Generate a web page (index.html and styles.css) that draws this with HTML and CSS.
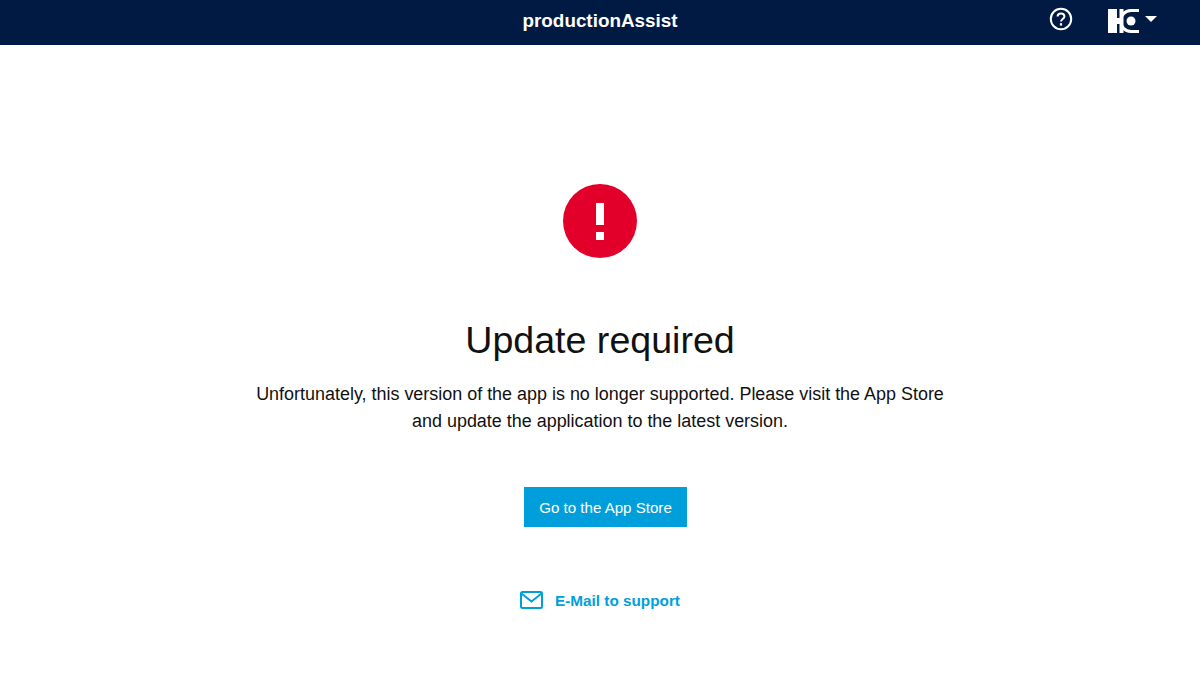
FILE: index.html
```html
<!DOCTYPE html>
<html lang="en">
<head>
    <meta charset="UTF-8">
    <title>productionAssist</title>
    <link rel="stylesheet" href="styles.css">
</head>
<body>
    <header class="topbar">
        <div class="brand">productionAssist</div>
        <div class="topbar-actions">
            <svg class="help-icon" width="24" height="24" viewBox="0 0 24 24" fill="none" stroke="#fff">
                <circle cx="12" cy="12" r="10.2" stroke-width="2"/>
                <path d="M8.6 9.6c0-2 1.5-3.2 3.4-3.2s3.4 1.2 3.4 3c0 2.6-3.4 2.6-3.4 5.2" stroke-width="2"/>
                <rect x="10.9" y="16.2" width="2.2" height="2.4" fill="#fff" stroke="none"/>
            </svg>
            <div class="user-menu">
                <svg width="31" height="24" viewBox="0 0 31 24">
                    <path d="M0 0h9v9h2.500V0h4v24h-4V15H9v9H0z" fill="#fff"/>
                    <path d="M31 0H23a12 12 0 0 0-9 4v16a12 12 0 0 0 9 4h8v-3h-8a9 9 0 0 1 0-18h8z" fill="#fff"/>
                    <circle cx="23" cy="12" r="4.500" fill="#fff"/>
                </svg>
                <span class="caret"></span>
            </div>
        </div>
    </header>

    <main class="content">
        <div class="alert-icon">
            <span class="alert-bar"></span>
            <span class="alert-dot"></span>
        </div>
        <h1>Update required</h1>
        <p>Unfortunately, this version of the app is no longer supported. Please visit the App Store<br>and update the application to the latest version.</p>
        <a class="button">Go to the App Store</a>
        <a class="support">
            <svg class="mail-icon" width="23" height="18" viewBox="0 0 23 18" fill="none" stroke="#009fdc" stroke-width="2">
                <rect x="1" y="1" width="21" height="16" rx="1.500"/>
                <path d="M1.500 2.500L11.500 10.500l10-8"/>
            </svg>
            <span>E-Mail to support</span>
        </a>
    </main>
</body>
</html>
```
FILE: styles.css
```css
* {
    margin: 0;
    padding: 0;
    box-sizing: border-box;
}

body {
    font-family: 'Liberation Sans', Arial, sans-serif;
    background-color: #fff;
    color: #111;
    width: 1200px;
    height: 675px;
    overflow: hidden;
}

.topbar {
    height: 45px;
    background-color: #001a43;
    display: flex;
    align-items: center;
    justify-content: center;
    position: relative;
}

.brand {
    color: #fff;
    font-size: 18.85px;
    font-weight: bold;
    margin-bottom: 3px;
}

.topbar-actions {
    position: absolute;
    top: 0;
    right: 43px;
    height: 40px;
    display: flex;
    align-items: center;
    gap: 35px;
}

.help-icon {
    margin-top: -2px;
}

.user-menu {
    display: flex;
    align-items: center;
    gap: 8px;
    margin-top: 1px;
}

.caret {
    width: 0;
    height: 0;
    border-left: 6px solid transparent;
    border-right: 6px solid transparent;
    border-top: 6px solid #fff;
    margin-left: -2px;
    margin-top: -3px;
}

.content {
    display: flex;
    flex-direction: column;
    align-items: center;
    padding-top: 139px;
}

.alert-icon {
    width: 74px;
    height: 74px;
    border-radius: 50%;
    background-color: #e2002a;
    display: flex;
    flex-direction: column;
    align-items: center;
    padding-top: 19px;
    gap: 7px;
}

.alert-bar {
    width: 8px;
    height: 22px;
    background-color: #fff;
}

.alert-dot {
    width: 8px;
    height: 8px;
    background-color: #fff;
}

h1 {
    font-size: 37.6px;
    font-weight: normal;
    line-height: 44px;
    margin-top: 60px;
}

p {
    font-size: 17.95px;
    line-height: 27px;
    text-align: center;
    margin-top: 19px;
}

.button {
    display: block;
    width: 163px;
    height: 40px;
    line-height: 42px;
    background-color: #009fdc;
    color: #fff;
    font-size: 15.1px;
    text-align: center;
    margin-top: 52px;
    margin-left: 11px;
}

.support {
    display: flex;
    align-items: center;
    gap: 12px;
    color: #009fdc;
    font-size: 15.3px;
    font-weight: bold;
    margin-top: 65px;
}

.mail-icon {
    margin-top: -3px;
}
```
